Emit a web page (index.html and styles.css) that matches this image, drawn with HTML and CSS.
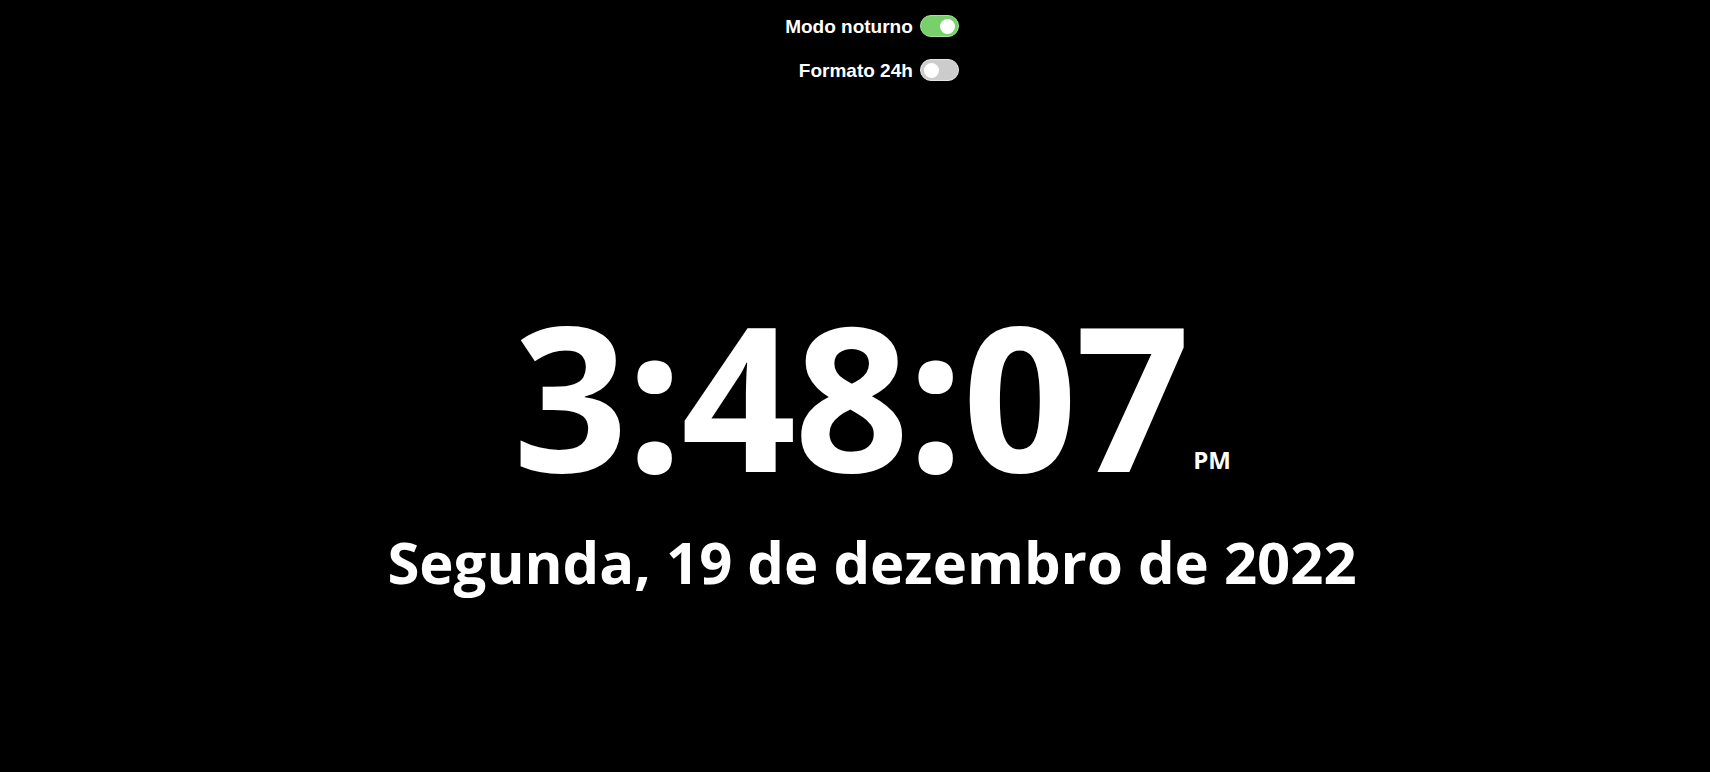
FILE: index.html
```html
<!DOCTYPE html>
<html lang="pt-BR">
<head>
<meta charset="utf-8">
<title>Relógio</title>
<link rel="stylesheet" href="styles.css">
</head>
<body>
<div class="page">
  <div class="settings">
    <label class="setting">
      <span class="setting-label">Modo noturno</span>
      <span class="switch switch-on"><span class="knob"></span></span>
    </label>
    <label class="setting">
      <span class="setting-label">Formato 24h</span>
      <span class="switch switch-off"><span class="knob"></span></span>
    </label>
  </div>
  <main class="clock">
    <div class="time-row">
      <span class="time">3:48:07</span>
      <span class="ampm">PM</span>
    </div>
    <div class="date">Segunda, 19 de dezembro de 2022</div>
  </main>
</div>
</body>
</html>
```
FILE: styles.css
```css
html, body {
  margin: 0;
  padding: 0;
  background: #000;
  color: #fff;
}

body {
  height: 772px;
  overflow: hidden;
}

.page {
  padding-left: 34px;
  display: flex;
  flex-direction: column;
  align-items: center;
}

.settings {
  padding-top: 15px;
  display: flex;
  flex-direction: column;
  align-items: flex-end;
  gap: 22px;
}

.setting {
  display: flex;
  align-items: center;
  gap: 7px;
  height: 22px;
}

.setting-label {
  font-family: "Liberation Sans", Arial, sans-serif;
  font-weight: 700;
  font-size: 19px;
  line-height: 1;
}

.switch {
  box-sizing: border-box;
  width: 39px;
  height: 22px;
  border-radius: 11px;
  display: flex;
  align-items: center;
  padding: 0 3px;
}

.switch-on {
  background: #78d06a;
  border: 1px solid #a6e29a;
  justify-content: flex-end;
}

.switch-off {
  background: #cccccc;
  border: 1px solid #e6e6e6;
  justify-content: flex-start;
}

.knob {
  width: 15px;
  height: 15px;
  border-radius: 50%;
  background: #fff;
}

.clock {
  margin-top: 213px;
  display: flex;
  flex-direction: column;
  align-items: center;
  font-family: "Open Sans", "Noto Sans", sans-serif;
  font-weight: 700;
}

.time-row {
  display: flex;
  align-items: flex-end;
}

.time {
  font-size: 201px;
  line-height: 1;
  letter-spacing: -2px;
}

.ampm {
  font-size: 24px;
  line-height: 1;
  margin-left: 5px;
  margin-bottom: 23px;
}

.date {
  margin-top: 38px;
  font-size: 58px;
  line-height: 1;
}
```
